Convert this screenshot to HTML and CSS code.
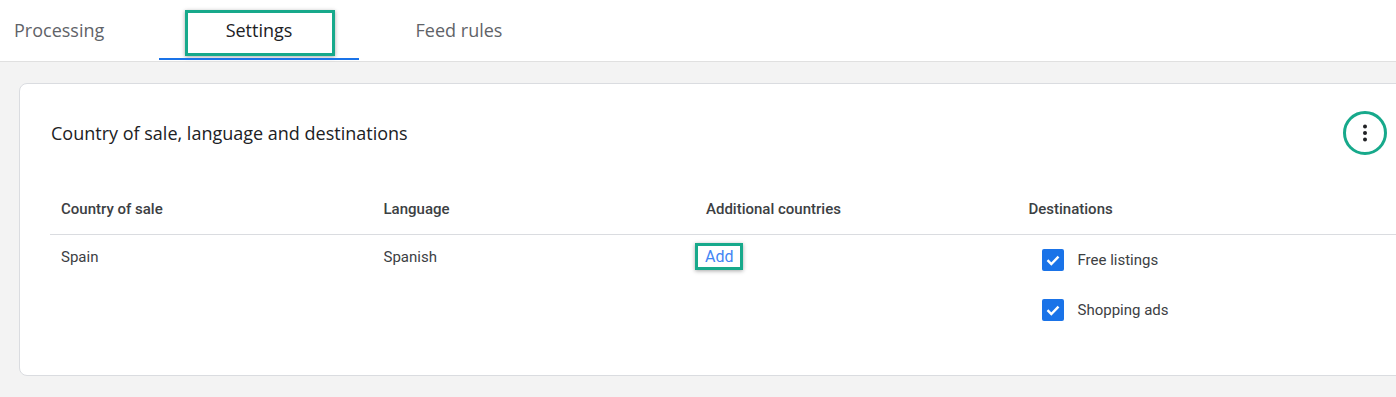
FILE: index.html
```html
<!DOCTYPE html>
<html>
<head>
<meta charset="utf-8">
<link rel="stylesheet" href="styles.css">
</head>
<body>
<nav class="tabs">
  <div class="tab tab-first">Processing</div>
  <div class="tab tab-active"><span class="hl-box"></span>Settings</div>
  <div class="tab">Feed rules</div>
</nav>
<main class="main">
  <section class="card">
    <header class="card-head">
      <h2 class="card-title">Country of sale, language and destinations</h2>
      <button class="more">
        <svg width="24" height="24" viewBox="0 0 24 24"><circle cx="12" cy="5.5" r="2" fill="#202124"/><circle cx="12" cy="12" r="2" fill="#202124"/><circle cx="12" cy="18.5" r="2" fill="#202124"/></svg>
      </button>
    </header>
    <div class="table">
      <div class="row head">
        <div class="cell">Country of sale</div>
        <div class="cell">Language</div>
        <div class="cell">Additional countries</div>
        <div class="cell">Destinations</div>
      </div>
      <div class="row body">
        <div class="cell">Spain</div>
        <div class="cell">Spanish</div>
        <div class="cell"><a class="add">Add</a></div>
        <div class="cell dest">
          <label class="check"><span class="box"><svg width="22" height="22" viewBox="0 0 22 22"><path d="M5.5 11.2l3.8 3.8 7.2-7.4" fill="none" stroke="#fff" stroke-width="2.4"/></svg></span>Free listings</label>
          <label class="check"><span class="box"><svg width="22" height="22" viewBox="0 0 22 22"><path d="M5.5 11.2l3.8 3.8 7.2-7.4" fill="none" stroke="#fff" stroke-width="2.4"/></svg></span>Shopping ads</label>
        </div>
      </div>
    </div>
  </section>
</main>
</body>
</html>
```
FILE: styles.css
```css
html, body {
  margin: 0;
  padding: 0;
}
body {
  background: #f3f3f3;
  font-family: Roboto, "Liberation Sans", sans-serif;
  overflow: hidden;
  width: 1396px;
  height: 397px;
}
.tabs {
  display: flex;
  height: 61px;
  background: #fff;
  border-bottom: 1px solid #e0e0e0;
}
.tab {
  position: relative;
  width: 200px;
  display: flex;
  align-items: center;
  justify-content: center;
  font-family: "Open Sans", Roboto, sans-serif;
  font-size: 18px;
  color: #5f6368;
  box-sizing: border-box;
  padding-bottom: 2px;
}
.tab-first {
  width: 159px;
  justify-content: flex-start;
  padding-left: 14px;
}
.tab-active {
  color: #202124;
  font-weight: 500;
}
.tab-active::after {
  content: "";
  position: absolute;
  left: 0;
  right: 0;
  bottom: 1px;
  height: 2px;
  background: #1a73e8;
}
.hl-box {
  position: absolute;
  left: 26px;
  top: 10px;
  width: 150px;
  height: 46px;
  box-sizing: border-box;
  border: 3px solid #17a98b;
  box-shadow: 0 1px 4px rgba(0,0,0,.35);
}
.main {
  padding-top: 21px;
}
.card {
  margin-left: 19px;
  width: 1391px;
  height: 293px;
  box-sizing: border-box;
  background: #fff;
  border: 1px solid #dadce0;
  border-radius: 8px;
}
.card-head {
  height: 98px;
  display: flex;
  align-items: center;
  justify-content: space-between;
  padding: 0 22px 0 31px;
}
.card-title {
  margin: 0;
  font-family: "Open Sans", Roboto, sans-serif;
  font-size: 18px;
  font-weight: 400;
  color: #202124;
}
.more {
  width: 44px;
  height: 44px;
  box-sizing: border-box;
  border: 3px solid #17a98b;
  border-radius: 50%;
  background: #fff;
  display: flex;
  align-items: center;
  justify-content: center;
  padding: 0;
}
.table {
  margin-left: 30px;
}
.row {
  display: grid;
  grid-template-columns: 322.5px 322.5px 322.5px 1fr;
}
.row.head {
  height: 52px;
  align-items: center;
  border-bottom: 1px solid #dadce0;
  font-weight: 500;
  color: #3c4043;
  font-size: 15px;
}
.row.head .cell {
  padding-top: 1px;
}
.cell {
  padding-left: 11px;
}
.row.body .cell {
  padding-top: 14px;
  font-size: 15px;
  line-height: 16px;
  color: #3c4043;
}
.add {
  display: inline-block;
  margin-left: -11px;
  margin-top: -6px;
  padding: 2px 7px;
  border: 3px solid #17a98b;
  box-shadow: 0 1px 4px rgba(0,0,0,.35);
  color: #4285f4;
  font-size: 16px;
  line-height: 17px;
}
.row.body .dest {
  display: flex;
  flex-direction: column;
  gap: 28px;
  padding-left: 24px;
}
.check {
  display: flex;
  align-items: center;
  gap: 14px;
  height: 22px;
  font-size: 15px;
  color: #3c4043;
}
.box {
  width: 22px;
  height: 22px;
  border-radius: 2px;
  background: #1a73e8;
  display: block;
}
.box svg {
  display: block;
}
```
